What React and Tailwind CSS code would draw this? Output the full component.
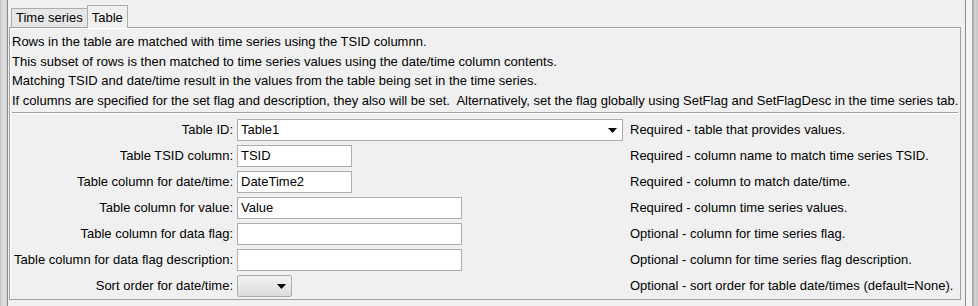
import React from 'react';

const descLines = [
    'Rows in the table are matched with time series using the TSID columnn.',
    'This subset of rows is then matched to time series values using the date/time column contents.',
    'Matching TSID and date/time result in the values from the table being set in the time series.',
    'If columns are specified for the set flag and description, they also will be set.\u00a0 Alternatively, set the flag globally using SetFlag and SetFlagDesc in the time series tab.',
];

const Arrow = () => (
    <svg width="9" height="5" viewBox="0 0 9 5" className="block">
        <path d="M0 0 H9 L4.5 5 Z" fill="#000" />
    </svg>
);

const TextBox = ({ value, width }) => (
    <div className={`h-[22px] ${width} bg-white border border-[#abadb3] flex items-center px-[3px]`}>
        {value}
    </div>
);

const Row = ({ label, control, note }) => (
    <>
        <div className="h-[22px] flex items-center justify-end pr-[4px] whitespace-nowrap">{label}</div>
        <div className="h-[22px] flex items-center">{control}</div>
        <div className="h-[22px] flex items-center pl-[1px] whitespace-nowrap">{note}</div>
    </>
);

const App = () => {
    return (
        <div
            className="w-[978px] h-[306px] bg-[#f0f0f0] flex text-[13px] text-black overflow-hidden"
            style={{ fontFamily: '"Liberation Sans", Arial, sans-serif' }}
        >
            {/* left window edge */}
            <div className="w-[7px] h-full bg-gradient-to-r from-[#c4c4c4] via-[#e2e2e2] to-[#d0d0d0]" />
            <div className="w-[1px] h-full bg-[#8e8e8e]" />

            <div className="w-[957px] h-full flex flex-col pl-[1px]">
                {/* tabs */}
                <div className="h-[27px] flex items-end pl-[2px] shrink-0">
                    <div className="h-[19px] px-[4px] flex items-center border border-b-0 border-[#adadad] bg-[#e6e6e6]">
                        Time series
                    </div>
                    <div className="h-[23px] px-[4px] flex items-start pt-[2px] border border-b-0 border-[#adadad] bg-[#f0f0f0] relative top-[1px] z-10 -ml-[1px]">
                        Table
                    </div>
                </div>

                {/* tab content */}
                <div className="w-[952px] h-[273px] border border-[#a0a0a0] flex flex-col">
                    <div className="flex-1 border-t border-l border-white flex flex-col pl-[1px] pr-[2px]">
                        <div className="pt-[3px] leading-[19.5px] whitespace-nowrap">
                            {descLines.map((t, i) => (
                                <div key={i}>{t}</div>
                            ))}
                        </div>
                        <div className="mt-[2px] border-t border-[#a0a0a0] border-b border-b-white" />

                        <div className="grid grid-cols-[225px_392px_1fr] gap-y-[4px] mt-[5px]">
                            <Row
                                label="Table ID:"
                                control={
                                    <div className="h-[22px] w-[386px] bg-white border border-[#abadb3] flex items-center justify-between pl-[3px] pr-[5px]">
                                        <span>Table1</span>
                                        <Arrow />
                                    </div>
                                }
                                note="Required - table that provides values."
                            />
                            <Row
                                label="Table TSID column:"
                                control={<TextBox value="TSID" width="w-[115px]" />}
                                note="Required - column name to match time series TSID."
                            />
                            <Row
                                label="Table column for date/time:"
                                control={<TextBox value="DateTime2" width="w-[115px]" />}
                                note="Required - column to match date/time."
                            />
                            <Row
                                label="Table column for value:"
                                control={<TextBox value="Value" width="w-[225px]" />}
                                note="Required - column time series values."
                            />
                            <Row
                                label="Table column for data flag:"
                                control={<TextBox value="" width="w-[225px]" />}
                                note="Optional - column for time series flag."
                            />
                            <Row
                                label="Table column for data flag description:"
                                control={<TextBox value="" width="w-[225px]" />}
                                note="Optional - column for time series flag description."
                            />
                            <Row
                                label="Sort order for date/time:"
                                control={
                                    <div className="h-[22px] w-[55px] rounded-[2px] border border-[#acacac] bg-gradient-to-b from-[#f2f2f2] to-[#dcdcdc] flex items-center justify-end pr-[5px]">
                                        <Arrow />
                                    </div>
                                }
                                note="Optional - sort order for table date/times (default=None)."
                            />
                        </div>
                    </div>
                </div>
            </div>

            {/* right edge */}
            <div className="w-[1px] h-full bg-[#8e8e8e]" />
            <div className="w-[6px] h-full bg-[#f4f4f4]" />
            <div className="w-[6px] h-full bg-gradient-to-r from-[#9a9a9a] via-[#d4d4d4] to-[#c8c8c8]" />
        </div>
    );
};

export default App;
